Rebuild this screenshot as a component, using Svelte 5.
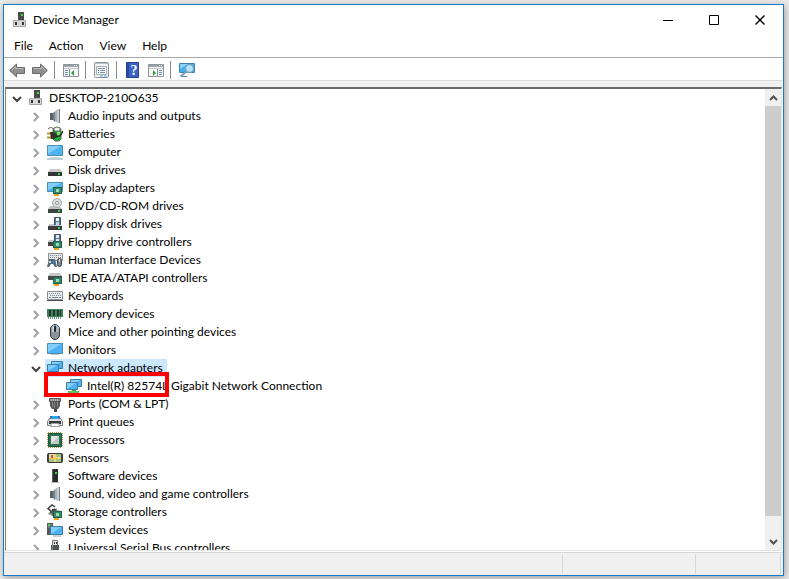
<script lang="ts">
  type Node = { label: string; icon: string };

  const ROOT = 'DESKTOP-210O635';

  const CATEGORIES: Node[] = [
    { label: 'Audio inputs and outputs', icon: 'speaker' },
    { label: 'Batteries', icon: 'battery' },
    { label: 'Computer', icon: 'computer' },
    { label: 'Disk drives', icon: 'disk' },
    { label: 'Display adapters', icon: 'display' },
    { label: 'DVD/CD-ROM drives', icon: 'dvd' },
    { label: 'Floppy disk drives', icon: 'floppy' },
    { label: 'Floppy drive controllers', icon: 'floppyctl' },
    { label: 'Human Interface Devices', icon: 'hid' },
    { label: 'IDE ATA/ATAPI controllers', icon: 'ide' },
    { label: 'Keyboards', icon: 'keyboard' },
    { label: 'Memory devices', icon: 'memory' },
    { label: 'Mice and other pointing devices', icon: 'mouse' },
    { label: 'Monitors', icon: 'monitor' },
    { label: 'Network adapters', icon: 'network' },
    { label: 'Ports (COM & LPT)', icon: 'port' },
    { label: 'Print queues', icon: 'printer' },
    { label: 'Processors', icon: 'cpu' },
    { label: 'Sensors', icon: 'sensor' },
    { label: 'Software devices', icon: 'software' },
    { label: 'Sound, video and game controllers', icon: 'speaker' },
    { label: 'Storage controllers', icon: 'storage' },
    { label: 'System devices', icon: 'system' },
    { label: 'Universal Serial Bus controllers', icon: 'usb' },
  ];

  const CHILDREN: Record<string, Node[]> = {
    'Network adapters': [{ label: 'Intel(R) 82574L Gigabit Network Connection', icon: 'nic' }],
  };

  const MENUS = ['File', 'Action', 'View', 'Help'];

  const TOOLS = [
    [
      { label: 'Back', icon: 'back' },
      { label: 'Forward', icon: 'forward' },
    ],
    [{ label: 'Show/Hide Console Tree', icon: 'tree' }],
    [{ label: 'Properties', icon: 'props' }],
    [
      { label: 'Help', icon: 'help' },
      { label: 'Show/Hide Action Pane', icon: 'actions' },
    ],
    [{ label: 'Scan for hardware changes', icon: 'scan' }],
  ];

  let rootOpen = $state(true);
  let open = $state<Record<string, boolean>>({ 'Network adapters': true });
  let selected = $state('Network adapters');

  function toggle(label: string) {
    open[label] = !open[label];
  }
</script>

{#snippet card(x: number, y: number)}
  <rect x={x + 0.5} y={y + 0.5} width="8" height="6" fill="#2f8a68" stroke="#23614a" />
  <rect x={x + 3} y={y + 2} width="3" height="3" fill="#9ad8b8" />
  <path d="M{x + 1} {y + 8}h5" stroke="#f0a020" stroke-width="2" />
{/snippet}

{#snippet icon(name: string)}
  <svg class="icon" viewBox="0 0 16 16" aria-hidden="true">
    {#if name === 'host'}
      <rect x="6" y="0" width="6" height="9" fill="#4a4a4a" />
      <rect x="9" y="2" width="2" height="2" fill="#35e045" />
      <path d="M1.5 8.5h12v6h-12z" fill="#d8d8d8" stroke="#a0a0a0" />
      <path d="M3 10h2v3H3zM10 10h2v3h-2z" fill="#333" />
      <path d="M1 8.5h13" stroke="#b5b5b5" />
    {:else if name === 'speaker'}
      <path d="M3 5h3v7H3z" fill="#59636b" />
      <path d="M6 5l5-4v14l-5-3z" fill="#a5afb6" />
      <path d="M6 5l2-1v10l-2-2z" fill="#748089" />
      <path d="M10 1h2v14h-2z" fill="#c8ced2" />
      <path d="M12.5 1v14" stroke="#727c84" />
    {:else if name === 'battery'}
      <path d="M7 2h6l1 2v9l-2 2H8l-2-2V4z" fill="#1fae35" stroke="#566356" />
      <path d="M7 2l3-1 3 1v3H7z" fill="#f2f5f2" stroke="#6a756a" />
      <path d="M10 6h3v4h-3z" fill="#7de077" />
      <path d="M1 3c3-3 6-1 6 3" fill="none" stroke="#555" />
      <path d="M0 7.5h4M0 11.5h4" stroke="#b59422" stroke-width="2" />
      <path d="M3 6h4l3 2v3l-3 2H4z" fill="#33352c" />
      <path d="M9 10c4 1 5-1 7-5" fill="none" stroke="#292929" stroke-width="1.4" />
    {:else if name === 'computer' || name === 'monitor'}
      <path d="M.5 1.5h15v10H.5z" fill="#4db2f3" stroke="#4c8db5" />
      <path d="M1 2h13L1 10z" fill="#83cdf9" />
      {#if name === 'computer'}
        <path d="M3 13.5h10" stroke="#c6d3dc" />
        <path d="M0 15h16" stroke="#7f9caf" />
      {:else}
        <path d="M4 12.5h8" stroke="#b6c4cd" />
      {/if}
    {:else if name === 'disk'}
      <path d="M3 7h10l2 3H1z" fill="#cbcbcb" />
      <path d="M1 10h14v4H1z" fill="#363636" />
      <path d="M11 11h2v2h-2z" fill="#2bd249" />
    {:else if name === 'display'}
      <path d="M.5 2.5h15v9H.5z" fill="#4db2f3" stroke="#4c8db5" />
      <path d="M1 3h13L1 10z" fill="#83cdf9" />
      {@render card(6, 7)}
    {:else if name === 'dvd'}
      <path d="M3 8h9l3 3H1z" fill="#bfc1c2" />
      <circle cx="10" cy="5" r="4.5" fill="#d9dcdd" stroke="#a4a9ac" />
      <circle cx="10" cy="5" r="1.5" fill="#fff" stroke="#8d9295" />
      <path d="M1 11h14v4H1z" fill="#3f4242" />
      <path d="M11 12h2v2h-2z" fill="#33d64d" />
    {:else if name === 'floppy'}
      <path d="M7.5 1.5h6v8h-6z" fill="#5d7386" stroke="#3e566a" />
      <path d="M9 2h3v3H9z" fill="#f5f5f5" />
      <path d="M9 6h3v3H9z" fill="#b8d8ee" />
      <path d="M2 8h5v1h7l1 1H1z" fill="#c4c4c4" />
      <path d="M1 10h14v4H1z" fill="#3a3a3a" />
      <path d="M11 11h2v2h-2z" fill="#2bd249" />
    {:else if name === 'floppyctl'}
      <path d="M7.5.5h6v7h-6z" fill="#5d7386" stroke="#3e566a" />
      <path d="M9 1h3v3H9zM9 5h3v3H9z" fill="#dcebf5" />
      <path d="M2 6h5v2H1z" fill="#c4c4c4" />
      <path d="M1 8h8v4H1z" fill="#444" />
      {@render card(6, 7)}
    {:else if name === 'hid'}
      <path d="M1.5 1.5h14v7h-14z" fill="#e4e7e9" stroke="#8c9295" />
      <path d="M3 3.5h12M3 5.5h12" stroke="#848b90" stroke-dasharray="1 1" />
      <path d="M2 7h6l2 8H8l-2-3H4l-2 3H0z" fill="#596775" />
      <path d="M2 9h2v2H2z" fill="#c4d6e4" />
      <path d="M6 9h2v2H6z" fill="#2684d4" />
      <rect x="10.5" y="6.5" width="4" height="8" rx="2" fill="#7b858e" stroke="#3e454c" />
      <path d="M12.5 7v3" stroke="#ddd" />
    {:else if name === 'ide'}
      <path d="M3 3h10l2 3H1z" fill="#c8c8c8" />
      <path d="M1 6h14v2H6v2H1z" fill="#484848" />
      {@render card(6, 7)}
    {:else if name === 'keyboard'}
      <path d="M.5 3.5h15v8H.5z" fill="#eceeef" stroke="#8b9196" />
      <path d="M2 5.5h12M3 7.5h11" stroke="#7b8288" stroke-dasharray="1 1" />
      <path d="M2 9.5h2m1 0h6m1 0h2" stroke="#7b8288" />
      <path d="M0 12.5h16" stroke="#4b5157" />
    {:else if name === 'memory'}
      <path d="M0 3h16v8H0z" fill="#3f805a" />
      <path d="M2 4h2v6H2zM6 4h2v6H6zM10 4h2v6h-2zM13 4h1v6h-1z" fill="#1d3a2a" />
      <path d="M1 12h14" stroke="#6f9a7d" stroke-width="2" stroke-dasharray="1 1" />
    {:else if name === 'mouse'}
      <rect x="3.5" y=".5" width="9" height="15" rx="4.5" fill="#8b949c" stroke="#343a40" />
      <path d="M5 4c0-2 1-3 2-3v7H5z" fill="#c7ced4" />
      <path d="M9 1c2 0 3 2 3 3v4H9z" fill="#a9b3bb" />
      <rect x="7" y="2" width="2" height="6" rx="1" fill="#20252a" />
    {:else if name === 'network' || name === 'nic'}
      <path d="M4.5 1.5h11v7h-11z" fill="#4db2f3" stroke="#3b7ba5" />
      <path d="M5 2h9L5 8z" fill="#83cdf9" />
      <path d="M.5 4.5h11v7H.5z" fill="#4db2f3" stroke="#3b7ba5" />
      <path d="M1 5h9L1 11z" fill="#83cdf9" />
      {#if name === 'nic'}
        <path d="M6 12h4v2H6z" fill="#4d9a4a" />
        <path d="M2 14h11" stroke="#5dc258" stroke-width="2" />
      {:else}
        <path d="M3 13.5h7" stroke="#7999ac" />
      {/if}
    {:else if name === 'port'}
      <path d="M3 5h10v5l-2 3H5l-2-3z" fill="#555" />
      <path d="M2.5 2.5h11v3h-11z" fill="#8a8a8a" stroke="#555" />
      <path d="M4 4h8" stroke="#ddd" stroke-dasharray="1 1" />
      <path d="M5.5 6v5m2-5v6m3-6v5" stroke="#888" />
      <path d="M7 13h3v3H7z" fill="#444" />
    {:else if name === 'printer'}
      <path d="M3 2h10v4H3z" fill="#1c74d4" />
      <path d="M5 2h3v3H5z" fill="#30b7dc" />
      <path d="M9 2h2v2H9z" fill="#69c53b" />
      <path d="M2.5 4.5h11l2 3v4H.5v-4z" fill="#dcdfe1" stroke="#777c80" />
      <path d="M5 2h6v3H5z" fill="#2aa7e0" />
      <path d="M2 7h12v3H2z" fill="#373b3e" />
      <path d="M4.5 9.5h7l1 3h-9z" fill="#fff" stroke="#9a9fa3" />
    {:else if name === 'cpu'}
      <path d="M1 .5h14M1 15.5h14M.5 1v14M15.5 1v14" stroke="#b29a4a" stroke-dasharray="1 1" />
      <path d="M1.5 1.5h13v13h-13z" fill="#2b7150" stroke="#1b5439" />
      <path d="M4 4h8v8H4z" fill="#dfe3e2" />
      <path d="M4 12l8-8v8z" fill="#bfc7c5" />
    {:else if name === 'sensor'}
      <rect x=".5" y="3.5" width="15" height="9" rx="1" fill="#444" stroke="#3a3a3a" />
      <path d="M2 4h12v8H2z" fill="#e6e0ae" />
      <path d="M2 9h5v3H2zM9 4h5v3H9zM9 9h5v3H9z" fill="#a5c17c" />
      <path d="M8 4v8M2 8.5h12" stroke="#f1c94e" />
      <path d="M4 5h2v3H4z" fill="#d94b38" />
    {:else if name === 'software'}
      <path d="M5 1h6v13H5z" fill="#292c2e" />
      <path d="M5 1h1v13H5z" fill="#5b6164" />
      <path d="M8 4h2v2H8z" fill="#35e045" />
      <path d="M4 14.5h8" stroke="#b6bbbd" />
    {:else if name === 'storage'}
      <path d="M8 3L5 1 1 4.500l3.500 3L8 5.500H5" fill="none" stroke="#3b3b3b" stroke-width="1.500" />
      <path d="M3 8l5-2 6 1v2H6v3l-5-2z" fill="#555" />
      <path d="M1 10h4" stroke="#ccc" />
      {@render card(6, 7)}
    {:else if name === 'system'}
      <path d="M0 1h6v12H0z" fill="#53585c" />
      <path d="M1 3h4M1 5h4" stroke="#8a9297" />
      <path d="M1 2h2v2H1z" fill="#43de50" />
      <path d="M3.500 4.500h12v8h-12z" fill="#4db2f3" stroke="#3b7ba5" />
      <path d="M4 5h10L4 12z" fill="#83cdf9" />
      <path d="M6 14h8" stroke="#8da2ae" />
    {:else if name === 'usb'}
      <path d="M5.500.5h5v5h-5z" fill="#e5e5e5" stroke="#777" />
      <path d="M7 2h1v2H7zM9 2h1v2H9z" fill="#333" />
      <path d="M4 5h8v7l-2 3H6l-2-3z" fill="#505457" />
      <path d="M5 5h1v8H5z" fill="#868a8d" />
    {:else if name === 'back' || name === 'forward'}
      <g transform={name === 'forward' ? 'matrix(-1 0 0 1 16 0)' : undefined}>
        <path d="M.7 8.500L7.500 2v3.500h8v6h-8V15z" fill="#8f8f8f" stroke="#6b6b6b" />
        <path d="M2.500 8.500L6.500 4.700v1.800h8" fill="none" stroke="#b9b9b9" />
      </g>
    {:else if name === 'tree' || name === 'actions'}
      <path d="M.5 2.500h15v12H.5z" fill="#f8f8f8" stroke="#8d939a" />
      <path d="M1 3h14v2H1z" fill="#9da3a9" />
      <path d="M11 3.500h1m1 0h1" stroke="#fff" />
      <path d="M1 6.500h14" stroke="#c2c6ca" />
      {#if name === 'tree'}
        <path d="M6.500 7v8" stroke="#858c94" />
        <path d="M2 8.500h3m-3 2h3m-3 2h3" stroke="#6d90b5" />
        <path d="M11 8v6l-3-3z" fill="#2da132" />
      {:else}
        <path d="M9.500 7v8" stroke="#858c94" />
        <path d="M11 8.500h3m-3 2h3m-3 2h3" stroke="#6d90b5" />
        <path d="M5 8v6l3-3z" fill="#2da132" />
      {/if}
    {:else if name === 'props'}
      <rect x=".5" y=".5" width="14" height="15" rx="1" fill="#f1f3f5" stroke="#88919b" />
      <path d="M1 1.500h13" stroke="#bcc3ca" />
      <path d="M2.500 4.500h10v8h-10z" fill="#fff" stroke="#a5adb5" />
      <path d="M4 6.500h7M6 8.500h5M6 10.500h5" stroke="#7992a9" />
      <path d="M4 8.500h1m-1 2h1" stroke="#168ee0" />
      <path d="M6 14h3m1 0h3" stroke="#42a5df" />
    {:else if name === 'help'}
      <path d="M1.500.5h12v15h-12z" fill="#3c62c8" stroke="#263f92" />
      <path d="M2 1h2v14H2z" fill="#294b9f" />
      <text x="9" y="13" text-anchor="middle" class="help-mark">?</text>
    {:else if name === 'scan'}
      <path d="M.5 1.500h15v9H.5z" fill="#45aef2" stroke="#3f83ad" />
      <path d="M1 2h8L1 7z" fill="#8bd1fa" />
      <path d="M2 14.500h6" stroke="#5c7c90" />
      <path d="M7.500 9.500l-6 5" stroke="#7f9eb3" stroke-width="2" />
      <circle cx="10.500" cy="6.500" r="4" fill="#b8e2fa" stroke="#7299b3" />
    {/if}
  </svg>
{/snippet}

{#snippet chevron(expanded: boolean)}
  <svg class="chevron" class:expanded viewBox="0 0 10 10" aria-hidden="true">
    {#if expanded}
      <path d="M1 3l4 4 4-4" />
    {:else}
      <path d="M3 1l4 4-4 4" />
    {/if}
  </svg>
{/snippet}

<div class="desktop">
  <div class="window">
    <header class="titlebar">
      {@render icon('host')}
      <h1>Device Manager</h1>
      <div class="controls">
        <button aria-label="Minimize">
          <svg viewBox="0 0 11 11"><path d="M0 5.500h10" /></svg>
        </button>
        <button aria-label="Maximize">
          <svg viewBox="0 0 11 11"><path d="M.5.5h9v9h-9z" /></svg>
        </button>
        <button aria-label="Close">
          <svg viewBox="0 0 11 11"><path class="cross" d="M.5.5l9 9M9.500.5l-9 9" /></svg>
        </button>
      </div>
    </header>

    <nav class="menubar">
      {#each MENUS as m (m)}
        <button>{m}</button>
      {/each}
    </nav>

    <div class="toolbar" role="toolbar" aria-label="Tools">
      {#each TOOLS as group, i}
        {#if i > 0}<span class="sep"></span>{/if}
        {#each group as t (t.label)}
          <button aria-label={t.label}>{@render icon(t.icon)}</button>
        {/each}
      {/each}
    </div>

    <main class="client">
      <div class="tree">
        <div class="row root">
          <button class="toggle" aria-label="Toggle {ROOT}" aria-expanded={rootOpen} onclick={() => (rootOpen = !rootOpen)}>
            {@render chevron(rootOpen)}
          </button>
          <button class="item">{@render icon('host')}<span>{ROOT}</span></button>
        </div>
        {#if rootOpen}
          <ul>
            {#each CATEGORIES as c (c.label)}
              <li>
                <div class="row">
                  <button class="toggle" aria-label="Toggle {c.label}" aria-expanded={!!open[c.label]} onclick={() => toggle(c.label)}>
                    {@render chevron(!!open[c.label])}
                  </button>
                  <button class="item" class:selected={selected === c.label} onclick={() => (selected = c.label)}>
                    {@render icon(c.icon)}<span>{c.label}</span>
                  </button>
                </div>
                {#if open[c.label] && CHILDREN[c.label]}
                  <ul>
                    {#each CHILDREN[c.label] as d (d.label)}
                      <li class="row leaf">
                        <button class="item" class:selected={selected === d.label} onclick={() => (selected = d.label)}>
                          {@render icon(d.icon)}<span>{d.label}</span>
                        </button>
                        <span class="marker"></span>
                      </li>
                    {/each}
                  </ul>
                {/if}
              </li>
            {/each}
          </ul>
        {/if}
      </div>
      <div class="scrollbar">
        <button aria-label="Scroll up"><svg viewBox="0 0 9 6"><path d="M1 5l3.500-3.500L8 5" /></svg></button>
        <div class="track"><div class="thumb"></div></div>
        <button aria-label="Scroll down"><svg viewBox="0 0 9 6"><path d="M1 1l3.500 3.500L8 1" /></svg></button>
      </div>
    </main>

    <footer class="statusbar">
      <span class="pane wide"></span>
      <span class="pane mid"></span>
      <span class="pane end"></span>
    </footer>
  </div>
</div>

<style>
  :global(body) {
    background: #ededed;
  }
  .desktop {
    box-sizing: border-box;
    height: 100vh;
    padding: 4px 5px 3px 3px;
    overflow: hidden;
  }
  .window {
    box-sizing: border-box;
    height: 100%;
    display: flex;
    flex-direction: column;
    border: 1px solid #1979ca;
    background: #fff;
    box-shadow: 1px 2px 8px rgba(0, 0, 0, 0.35);
    color: #000;
    font: 12px/18px Lato, 'Open Sans', sans-serif;
  }
  button {
    padding: 0;
    border: none;
    background: transparent;
    color: inherit;
    font: inherit;
  }
  ul {
    list-style: none;
    margin: 0;
    padding: 0;
  }
  .icon {
    display: block;
    width: 16px;
    height: 16px;
    flex-shrink: 0;
  }
  .help-mark {
    font: bold 14px 'Liberation Serif', serif;
    fill: #fff;
  }

  .titlebar {
    display: flex;
    align-items: center;
    height: 30px;
    padding-left: 8px;
    flex-shrink: 0;
  }
  h1 {
    flex: 1;
    margin: 0 0 0 5px;
    font-size: 12px;
    font-weight: 400;
  }
  .controls {
    display: flex;
    align-self: stretch;
  }
  .controls button {
    width: 46px;
    display: flex;
    align-items: center;
    justify-content: center;
  }
  .controls svg {
    width: 11px;
    height: 11px;
    fill: none;
    stroke: #000;
  }
  .cross {
    stroke-width: 1.4;
  }

  .menubar {
    display: flex;
    gap: 16px;
    height: 22px;
    padding-left: 10px;
    border-bottom: 1px solid #a9a9a9;
    flex-shrink: 0;
  }

  .toolbar {
    display: flex;
    align-items: center;
    height: 23px;
    padding: 1px 0 0 2px;
    border-bottom: 1px solid #d9d9d9;
    box-sizing: border-box;
    flex-shrink: 0;
  }
  .toolbar button {
    padding: 3px 4px 3px 3px;
  }
  .sep {
    width: 1px;
    height: 18px;
    margin: 0 5px 0 2px;
    background: #8c8c8c;
  }

  .client {
    flex: 1;
    min-height: 0;
    display: flex;
    margin: 6px 1px 0;
    border: solid;
    border-width: 2px 1px 1px;
    border-color: #696969 #e3e3e3 #e3e3e3 #828282;
    background: #fff;
    box-shadow: 0 -6px 0 #f0f0f0;
  }
  .tree {
    flex: 1;
    min-width: 0;
    overflow: hidden;
  }
  .row {
    position: relative;
    display: flex;
    height: 18px;
    padding-left: 24px;
  }
  .root {
    padding-left: 5px;
  }
  .leaf {
    padding-left: 58px;
  }
  .toggle {
    width: 12px;
    margin-right: 3px;
    display: flex;
    align-items: center;
    justify-content: center;
    padding-top: 2px;
  }
  .chevron {
    width: 10px;
    height: 10px;
    fill: none;
    stroke: #a0a0a0;
    stroke-width: 2;
  }
  .chevron.expanded {
    stroke: #404040;
  }
  .item {
    display: flex;
    align-items: center;
    gap: 5px;
    padding: 0 4px 0 2px;
    white-space: nowrap;
  }
  .item.selected {
    background: #cce8ff;
  }
  .marker {
    position: absolute;
    left: 38px;
    top: -5px;
    width: 117px;
    height: 17px;
    border: 4px solid #fe0000;
  }

  .scrollbar {
    width: 16px;
    display: flex;
    flex-direction: column;
    background: #f0f0f0;
  }
  .scrollbar button {
    height: 17px;
    display: flex;
    align-items: center;
    justify-content: center;
  }
  .scrollbar svg {
    width: 9px;
    height: 6px;
    fill: none;
    stroke: #505050;
    stroke-width: 2;
  }
  .track {
    flex: 1;
  }
  .thumb {
    height: 96%;
    background: #cdcdcd;
  }

  .statusbar {
    display: flex;
    height: 22px;
    margin-top: 1px;
    padding: 0 2px 0 0;
    border-top: 1px solid #d7d7d7;
    background: #f0f0f0;
    flex-shrink: 0;
  }
  .pane {
    margin: 1px 0;
    border-right: 1px solid #d7d7d7;
  }
  .wide {
    flex: 558;
  }
  .mid {
    flex: 132;
  }
  .end {
    flex: 84;
  }
</style>
